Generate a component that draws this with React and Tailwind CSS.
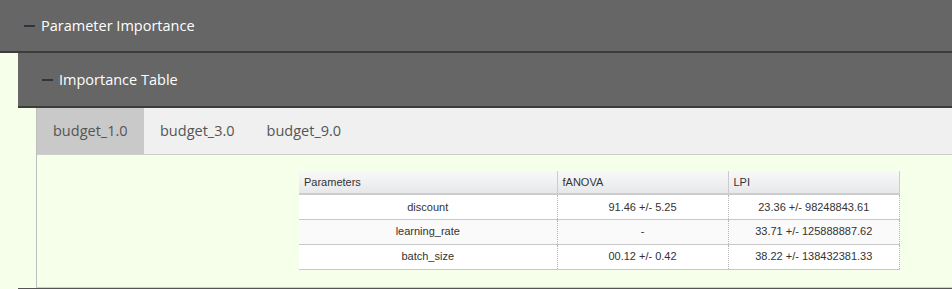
const rows = [
  { name: 'discount', fanova: '91.46 +/- 5.25', lpi: '23.36 +/- 98248843.61' },
  { name: 'learning_rate', fanova: '-', lpi: '33.71 +/- 125888887.62' },
  { name: 'batch_size', fanova: '00.12 +/- 0.42', lpi: '38.22 +/- 138432381.33' },
];

const tabs = ['budget_1.0', 'budget_3.0', 'budget_9.0'];

function Header({ title, className = '' }) {
  return (
    <div className={`flex items-center border-b-2 border-[#3c3c3c] bg-[#666666] pl-[24px] ${className}`}>
      <span className="mr-[6px] block h-[2px] w-[11px] bg-[#2c3640]" />
      <span className="text-[14.5px] text-white">{title}</span>
    </div>
  );
}

export default function App() {
  return (
    <div className="h-[289px] w-[952px] overflow-hidden bg-[#f6ffe9] font-['Open_Sans',sans-serif]">
      <Header title="Parameter Importance" className="h-[53px]" />
      <div className="pl-[18px]">
        <Header title="Importance Table" className="h-[55px]" />
        <div className="border-b-2 border-[#555555] pl-[18px]">
          <div className="h-[180px] border-b border-l border-[#bdbdbd] border-b-[#cfcfcf]">
            <div className="flex h-[47px] border-b border-[#cccccc] bg-[#f0f0f0]">
              {tabs.map((t, i) => (
                <div
                  key={t}
                  className={`flex h-full items-center px-[16px] text-[14.5px] text-[#555555] ${i === 0 ? 'w-[107px] bg-[#c9c9c9]' : ''}`}
                >
                  {t}
                </div>
              ))}
            </div>
            <div className="pl-[262px] pt-[16px]">
              <table className="w-[601px] border-collapse font-['Liberation_Sans',Arial,sans-serif] text-[11px] text-[#333333]">
                <thead>
                  <tr className="h-[23px] bg-gradient-to-b from-[#f9f9f9] to-[#e6e7e9]">
                    <th className="w-[258px] border-b-2 border-[#cccccc] px-[5px] text-left font-normal">Parameters</th>
                    <th className="w-[171px] border-b-2 border-l border-[#cccccc] px-[5px] text-left font-normal">fANOVA</th>
                    <th className="border-b-2 border-l border-r border-[#cccccc] px-[5px] text-left font-normal">LPI</th>
                  </tr>
                </thead>
                <tbody>
                  {rows.map((r, i) => (
                    <tr key={r.name} className={`h-[25px] border-b border-[#c8c8c8] ${i === 1 ? 'bg-[#fafafa]' : 'bg-white'}`}>
                      <td className="text-center">{r.name}</td>
                      <td className="border-l border-dotted border-[#b5b5b5] text-center">{r.fanova}</td>
                      <td className="border-l border-r border-dotted border-[#b5b5b5] text-center">{r.lpi}</td>
                    </tr>
                  ))}
                </tbody>
              </table>
            </div>
          </div>
        </div>
      </div>
    </div>
  );
}
